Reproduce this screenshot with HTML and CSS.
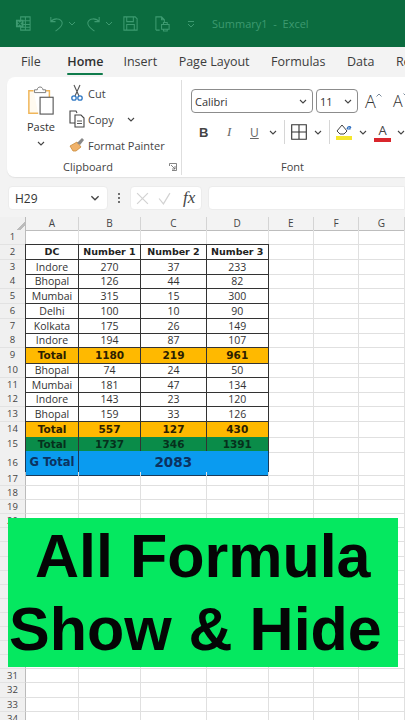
FILE: index.html
```html
<!DOCTYPE html>
<html lang="en">
<head>
<meta charset="utf-8">
<title>Summary1 - Excel</title>
<link rel="stylesheet" href="styles.css">
</head>
<body>
<div class="app">
  <header class="titlebar">
    <svg class="ti ti-xl" viewBox="0 0 18 18"><path d="M6 2h10v14H6zM6 6h10M6 10h10M6 13h10M11 2v14"/><rect x="1" y="5" width="8" height="8" fill="#3d9a70" stroke="none"/><path d="M3 7l4 4M7 7l-4 4" stroke="#0b6c3f"/></svg>
    <svg class="ti ti-undo" viewBox="0 0 18 18"><path d="M3 2v5h5M3 7c3-4 11-4 12 1 .6 4-3 6-7 9"/></svg>
    <svg class="ti-chev" viewBox="0 0 8 5"><path d="M1 1l3 3 3-3"/></svg>
    <svg class="ti ti-redo" viewBox="0 0 18 18"><path d="M15 2v5h-5M15 7c-3-4-11-4-12 1-.6 4 3 6 7 9"/></svg>
    <svg class="ti-chev" viewBox="0 0 8 5"><path d="M1 1l3 3 3-3"/></svg>
    <svg class="ti ti-save" viewBox="0 0 18 18"><path d="M2 2h12l2 2v12H2zM5 2v5h7V2M5 16v-6h8v6"/></svg>
    <svg class="ti ti-print" viewBox="0 0 18 18"><path d="M2 16V2h6l3 3v3M8 2v3h3M2 16h4M8 10h8v5H8zM10 10V8h4v2M10 15v2h4v-2"/></svg>
    <svg class="ti-more" viewBox="0 0 8 8"><path d="M1 1.500h6M1 4l3 3 3-3"/></svg>
    <span class="doc">Summary1 &nbsp;-&nbsp; Excel</span>
  </header>

  <nav class="tabs">
    <span>File</span><span class="on">Home</span><span>Insert</span><span>Page Layout</span><span>Formulas</span><span>Data</span><span>Review</span>
  </nav>

  <section class="ribbon">
    <div class="group clip">
      <div class="clip-body">
        <div class="paste">
          <svg class="paste-ico" viewBox="0 0 30 32"><path d="M7 5H2v24h10" fill="#fffaf0" stroke="#f0b65a" stroke-width="1.600"/><path d="M20 5h4v7" fill="none" stroke="#f0b65a" stroke-width="1.600"/><path d="M8 7V4h3c0-4 6-4 6 0h3v3z" fill="#fff" stroke="#777" stroke-width="1"/><rect x="14" y="12" width="14" height="18" fill="#fff" stroke="#555" stroke-width="1.200"/></svg>
          <span>Paste</span>
          <svg class="chev" viewBox="0 0 8 5"><path d="M1 1l3 3 3-3"/></svg>
        </div>
        <div class="cmds">
          <div class="cmd"><svg viewBox="0 0 16 18"><path d="M5 1l5 11M11 1L6 12" fill="none" stroke="#555" stroke-width="1.100"/><circle cx="5" cy="14" r="2.200" fill="none" stroke="#2f78c4" stroke-width="1.300"/><circle cx="11" cy="14" r="2.200" fill="none" stroke="#2f78c4" stroke-width="1.300"/></svg><span>Cut</span></div>
          <div class="cmd"><svg viewBox="0 0 16 18"><path d="M6 13H1V1h6l1 2" fill="none" stroke="#444" stroke-width="1.100"/><path d="M6 5h6l3 3v9H6z" fill="#fff" stroke="#444" stroke-width="1.100"/><path d="M8 11h5M8 13.500h5" stroke="#555"/></svg><span>Copy</span><svg class="chev copy-chev" viewBox="0 0 8 5"><path d="M1 1l3 3 3-3"/></svg></div>
          <div class="cmd"><svg viewBox="0 0 16 18"><path d="M1 10l7-4 4 5-5 4H4z" fill="#f0b26a" stroke="#c98a3a" stroke-width=".8"/><path d="M8 7l5-5 2 2-4 5z" fill="#888"/></svg><span>Format Painter</span></div>
        </div>
      </div>
      <div class="foot foot-clip"><span>Clipboard</span><svg class="launch" viewBox="0 0 8 8"><path d="M.5 3V.5H7.500V7.500H3M2 2l4 4M6 3v3H3"/></svg></div>
    </div>

    <div class="group font">
      <div class="font-row">
        <div class="select sel-font"><span>Calibri</span><svg class="chev" viewBox="0 0 8 5"><path d="M1 1l3 3 3-3"/></svg></div>
        <div class="select sel-size"><span>11</span><svg class="chev" viewBox="0 0 8 5"><path d="M1 1l3 3 3-3"/></svg></div>
        <span class="grow">A<svg viewBox="0 0 6 4"><path d="M.5 3.500L3 1l2.500 2.500"/></svg></span>
        <span class="grow shrink">A<svg viewBox="0 0 6 4"><path d="M.5.5L3 3 5.500.5"/></svg></span>
      </div>
      <div class="fmt-row">
        <b class="f-b">B</b>
        <i class="f-i">I</i>
        <u class="f-u">U</u>
        <svg class="chev c-u" viewBox="0 0 8 5"><path d="M1 1l3 3 3-3"/></svg>
        <span class="sep"></span>
        <svg class="borders" viewBox="0 0 16 16"><path d="M.7.7h14.600v14.600H.7zM8 .7v14.600M.7 8h14.600"/></svg>
        <svg class="chev" viewBox="0 0 8 5"><path d="M1 1l3 3 3-3"/></svg>
        <span class="sep sep2"></span>
        <span class="fill"><svg viewBox="0 0 16 12"><path d="M1 7l5-6 5 6-3 3H4z" fill="#fff" stroke="#444"/><path d="M11 5c1-3 3-3 4-1M14 2v3h-3" fill="none" stroke="#2f6fc0" stroke-width="1.200"/></svg></span>
        <svg class="chev" viewBox="0 0 8 5"><path d="M1 1l3 3 3-3"/></svg>
        <span class="color">A</span>
        <svg class="chev" viewBox="0 0 8 5"><path d="M1 1l3 3 3-3"/></svg>
      </div>
      <div class="foot foot-font"><span>Font</span></div>
    </div>
  </section>

  <section class="fbar">
    <div class="box namebox"><span>H29</span><svg class="chev" viewBox="0 0 8 5"><path d="M1 1l3 3 3-3"/></svg></div>
    <span class="dots"></span>
    <div class="box fxbox">
      <svg class="x" viewBox="0 0 12 12"><path d="M1 1l10 10M11 1L1 11"/></svg>
      <svg class="x" viewBox="0 0 12 12"><path d="M1 6l4 5 6-10"/></svg>
      <span class="fx">fx</span>
    </div>
    <div class="box input"></div>
  </section>

  <section class="sheet">
    <div class="row head"><div class="rh corner"></div><div>A</div><div>B</div><div>C</div><div>D</div><div>E</div><div>F</div><div>G</div></div>
    <div class="row"><div class="rh">1</div><div></div><div></div><div></div><div></div><div></div><div></div><div></div></div>
    <div class="row data hdr"><div class="rh">2</div><div>DC</div><div>Number 1</div><div>Number 2</div><div>Number 3</div><div></div><div></div><div></div></div>
    <div class="row data"><div class="rh">3</div><div>Indore</div><div>270</div><div>37</div><div>233</div><div></div><div></div><div></div></div>
    <div class="row data"><div class="rh">4</div><div>Bhopal</div><div>126</div><div>44</div><div>82</div><div></div><div></div><div></div></div>
    <div class="row data"><div class="rh">5</div><div>Mumbai</div><div>315</div><div>15</div><div>300</div><div></div><div></div><div></div></div>
    <div class="row data"><div class="rh">6</div><div>Delhi</div><div>100</div><div>10</div><div>90</div><div></div><div></div><div></div></div>
    <div class="row data"><div class="rh">7</div><div>Kolkata</div><div>175</div><div>26</div><div>149</div><div></div><div></div><div></div></div>
    <div class="row data"><div class="rh">8</div><div>Indore</div><div>194</div><div>87</div><div>107</div><div></div><div></div><div></div></div>
    <div class="row data total"><div class="rh">9</div><div>Total</div><div>1180</div><div>219</div><div>961</div><div></div><div></div><div></div></div>
    <div class="row data"><div class="rh">10</div><div>Bhopal</div><div>74</div><div>24</div><div>50</div><div></div><div></div><div></div></div>
    <div class="row data"><div class="rh">11</div><div>Mumbai</div><div>181</div><div>47</div><div>134</div><div></div><div></div><div></div></div>
    <div class="row data"><div class="rh">12</div><div>Indore</div><div>143</div><div>23</div><div>120</div><div></div><div></div><div></div></div>
    <div class="row data"><div class="rh">13</div><div>Bhopal</div><div>159</div><div>33</div><div>126</div><div></div><div></div><div></div></div>
    <div class="row data total"><div class="rh">14</div><div>Total</div><div>557</div><div>127</div><div>430</div><div></div><div></div><div></div></div>
    <div class="row data total green"><div class="rh">15</div><div>Total</div><div>1737</div><div>346</div><div>1391</div><div></div><div></div><div></div></div>
    <div class="row grand"><div class="rh">16</div><div class="gname">G Total</div><div class="merged">2083</div><div></div><div></div><div></div></div>
    <div class="row low"><div class="rh">17</div><div></div><div></div><div></div><div></div><div></div><div></div><div></div></div>
    <div class="row low"><div class="rh">18</div><div></div><div></div><div></div><div></div><div></div><div></div><div></div></div>
    <div class="row low"><div class="rh">19</div><div></div><div></div><div></div><div></div><div></div><div></div><div></div></div>
    <div class="row low"><div class="rh">20</div><div></div><div></div><div></div><div></div><div></div><div></div><div></div></div>
    <div class="row low"><div class="rh"></div><div></div><div></div><div></div><div></div><div></div><div></div><div></div></div>
    <div class="row low"><div class="rh"></div><div></div><div></div><div></div><div></div><div></div><div></div><div></div></div>
    <div class="row low"><div class="rh"></div><div></div><div></div><div></div><div></div><div></div><div></div><div></div></div>
    <div class="row low"><div class="rh"></div><div></div><div></div><div></div><div></div><div></div><div></div><div></div></div>
    <div class="row low"><div class="rh"></div><div></div><div></div><div></div><div></div><div></div><div></div><div></div></div>
    <div class="row low"><div class="rh"></div><div></div><div></div><div></div><div></div><div></div><div></div><div></div></div>
    <div class="row low"><div class="rh"></div><div></div><div></div><div></div><div></div><div></div><div></div><div></div></div>
    <div class="row low"><div class="rh"></div><div></div><div></div><div></div><div></div><div></div><div></div><div></div></div>
    <div class="row low"><div class="rh"></div><div></div><div></div><div></div><div></div><div></div><div></div><div></div></div>
    <div class="row low"><div class="rh"></div><div></div><div></div><div></div><div></div><div></div><div></div><div></div></div>
    <div class="row low"><div class="rh">31</div><div></div><div></div><div></div><div></div><div></div><div></div><div></div></div>
    <div class="row low"><div class="rh">32</div><div></div><div></div><div></div><div></div><div></div><div></div><div></div></div>
    <div class="row low"><div class="rh">33</div><div></div><div></div><div></div><div></div><div></div><div></div><div></div></div>
    <div class="row low"><div class="rh">34</div><div></div><div></div><div></div><div></div><div></div><div></div><div></div></div>
  </section>

  <aside class="banner">
    <div class="line line1">All Formula</div>
    <div class="line line2">Show &amp; Hide</div>
  </aside>
</div>
</body>
</html>
```
FILE: styles.css
```css
* { box-sizing: border-box; }
html, body { margin: 0; padding: 0; }
body { width: 405px; height: 720px; overflow: hidden; background: #f3f3f3; font-family: "Open Sans", "Noto Sans", sans-serif; color: #333; }
.app { position: relative; width: 405px; height: 720px; overflow: hidden; }
svg { display: block; flex: none; }

.titlebar { height: 47px; background: #0b6c3f; display: flex; align-items: center; padding-left: 15px; }
.ti { width: 17px; height: 17px; fill: none; stroke: #3d9a70; stroke-width: 1.100; }
.ti-undo { margin-left: 16px; }
.ti-redo { margin-left: 9px; }
.ti-chev { width: 8px; height: 5px; margin-left: 3px; fill: none; stroke: #3d9a70; stroke-width: 1; }
.ti-save { margin-left: 9px; }
.ti-print { margin-left: 15px; }
.ti-more { width: 8px; height: 8px; margin-left: 16px; fill: none; stroke: #3d9a70; }
.doc { margin-left: 17px; font-size: 11px; color: #3d9a70; white-space: nowrap; }

.tabs { height: 30px; display: flex; gap: 21.500px; padding-left: 21px; align-items: center; font-size: 12.500px; color: #3c3c3c; white-space: nowrap; overflow: hidden; }
.tabs span { position: relative; line-height: 30px; }
.tabs .on { font-weight: 600; color: #303030; margin-left: 5px; margin-right: -1.500px; }
.tabs .on::after { content: ""; position: absolute; left: 0; right: 0; bottom: 2px; height: 2px; border-radius: 1px; background: #0f7b4b; }

.ribbon { margin-left: 7px; height: 100px; background: #fff; border-radius: 8px 0 0 8px; display: flex; box-shadow: 0 1px 1px #e2e2e2; }
.group { position: relative; display: flex; flex-direction: column; }
.clip { flex: none; width: 175px; border-right: 1px solid #dedede; margin: 3px 0 2px; }
.clip-body { flex: 1; display: flex; }
.paste { width: 53px; padding-top: 6px; display: flex; flex-direction: column; align-items: center; font-size: 11px; padding-left: 15px; }
.paste-ico { width: 28px; height: 30px; }
.paste span { margin-top: 3px; line-height: 16px; }
.paste .chev { margin-top: 6px; }
.chev { width: 8px; height: 5px; fill: none; stroke: #444; stroke-width: 1.100; }
.cmds { padding-left: 9px; display: flex; flex-direction: column; gap: 8px; padding-top: 4px; }
.cmd { display: flex; align-items: center; gap: 3px; height: 18px; font-size: 11px; color: #444; white-space: nowrap; }
.cmd svg:first-child { width: 16px; height: 18px; }
.copy-chev { margin-left: 10px; }
.foot { height: 17px; font-size: 11px; line-height: 17px; color: #444; }
.foot-clip { padding-left: 56px; display: flex; align-items: center; }
.launch { width: 8px; height: 8px; margin-left: 56px; fill: none; stroke: #666; stroke-width: .8; }

.font { flex: 1; min-width: 0; padding: 12px 0 0 9px; }
.font-row { display: flex; align-items: center; height: 24px; gap: 3px; }
.select { flex: none; height: 24px; border: 1px solid #8c8c8c; border-radius: 4px; display: flex; align-items: center; justify-content: space-between; padding: 0 5px 0 3px; font-size: 11px; color: #333; }
.sel-font { width: 122px; }
.sel-size { width: 42px; }
.grow { flex: none; display: flex; align-items: flex-start; font-size: 18px; line-height: 20px; color: #333; margin-left: 4px; width: 22px; font-weight: 300; }
.grow svg { width: 6px; height: 4px; margin-top: 2px; fill: none; stroke: #7a8a9a; }
.shrink { margin-left: 3px; font-size: 16px; }
.fmt-row { display: flex; align-items: center; height: 20px; margin-top: 9px; font-size: 12px; color: #444; }
.f-b { margin-left: 8px; width: 26px; font-family: "Liberation Sans", sans-serif; font-size: 13px; }
.f-i { width: 25px; font-family: "Liberation Serif", serif; font-size: 13px; color: #666; padding-left: 2px; }
.f-u { width: 16px; font-size: 12px; color: #666; }
.c-u { margin-left: 3px; }
.sep { flex: none; width: 1px; height: 24px; background: #d6d6d6; margin: 0 6px 0 7px; }
.borders { width: 16px; height: 16px; fill: none; stroke: #333; stroke-width: 1.100; margin-right: 7px; }
.sep2 { margin-left: 7px; }
.fill { flex: none; width: 16px; height: 16px; margin-right: 7px; border-bottom: 4px solid #f5e72c; display: block; }
.fill svg { width: 16px; height: 12px; }
.color { flex: none; width: 17px; height: 19px; margin: 0 6px 0 7px; text-align: center; font-size: 13px; line-height: 14px; border-bottom: 4px solid #d9262c; color: #444; }
.foot-font { margin-top: 16px; padding-left: 90px; }

.fbar { height: 40px; display: flex; align-items: center; padding: 9px 0 7px 8px; }
.box { height: 24px; background: #fff; border-radius: 4px; border: 1px solid #ececec; }
.namebox { width: 100px; display: flex; align-items: center; justify-content: space-between; padding: 0 7px 0 6px; font-size: 12px; color: #333; }
.namebox .chev { width: 10px; height: 6px; }
.dots { width: 2px; height: 2px; margin: 0 10px; border-radius: 50%; background: #444; box-shadow: 0 -4px #444, 0 4px #444; }
.fxbox { width: 72px; display: flex; align-items: center; gap: 9px; padding-left: 5px; }
.x { width: 13px; height: 13px; fill: none; stroke: #d2d2d2; stroke-width: 1.100; }
.fx { font-family: "Liberation Serif", serif; font-style: italic; font-size: 17px; color: #444; margin-left: 3px; }
.input { flex: 1; margin-left: 6px; border-radius: 4px 0 0 4px; }

.sheet { background: #fff; font-size: 10.500px; color: #333; }
.row { display: grid; grid-template-columns: 26px 53px 62px 66px 61.500px 45.500px 45px 46px; height: 14.750px; }
.row > div { border-right: 1px solid #e0e0e0; border-bottom: 1px solid #e0e0e0; text-align: center; line-height: 14px; white-space: nowrap; }
.row > .rh { background: #f0f0f0; border-right: 1px solid #bbb; border-bottom: 1px solid #e2e2e2; font-size: 9.500px; color: #444; }
.head { height: 14px; margin-bottom: -1px; }
.head > div { background: #f3f3f3; border-right: 1px solid #d4d4d4; border-bottom: 1px solid #bdbdbd; line-height: 13px; font-size: 10px; color: #444; }
.low { height: 14.100px; }
.low > div { line-height: 13px; }
.corner { background: linear-gradient(135deg, #f0f0f0 78%, #bbb 78%, #bbb 88%, #f0f0f0 88%) !important; }

.data > div:nth-child(n+2):nth-child(-n+5) { border-right-color: #333; border-bottom-color: #333; }
.row.data > div:nth-child(2) { box-shadow: -1px 0 #333; }
.hdr > div:nth-child(n+2):nth-child(-n+5) { font-family: "DejaVu Sans", sans-serif; font-weight: 700; font-size: 9.500px; color: #222; box-shadow: 0 -1px #333; }
.row.hdr > div:nth-child(2) { box-shadow: -1px 0 #333, 0 -1px #333, -1px -1px #333; }
.total > div:nth-child(n+2):nth-child(-n+5) { background: #ffb900; font-family: "DejaVu Sans", sans-serif; font-weight: 700; font-size: 10.500px; line-height: 15px; color: #2c2000; }
.green > div:nth-child(n+2):nth-child(-n+5) { background: #0a8c49; color: #06301c; }
.grand { height: 20.750px; }
.grand > .rh { line-height: 24px; }
.row > .gname { background: #0a9bf0; font-family: "DejaVu Sans", sans-serif; font-weight: 700; font-size: 11.500px; line-height: 22px; color: #0c3260; border-right-color: #1a3a5a; border-bottom-color: #1a3a5a; box-shadow: -1px 0 #1a3a5a; }
.row > .merged { grid-column: span 3; background: #0a9bf0; font-family: "DejaVu Sans", sans-serif; font-weight: 700; font-size: 13.500px; line-height: 22px; color: #0c3260; border-right-color: #1a3a5a; border-bottom-color: #1a3a5a; }

.banner { position: absolute; left: 8px; top: 518px; width: 390px; height: 149px; background: #05e860; color: #050505; font-family: "Liberation Sans", Arial, sans-serif; font-weight: 700; font-size: 61px; white-space: nowrap; }
.line1 { line-height: 77px; padding-left: 27px; }
.line2 { line-height: 69px; padding-left: 1px; }
```
